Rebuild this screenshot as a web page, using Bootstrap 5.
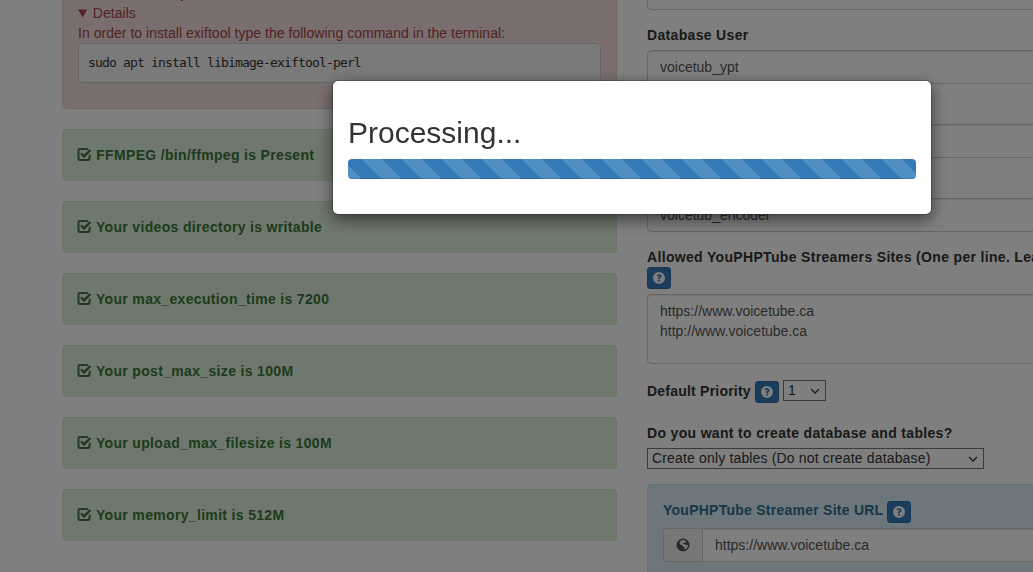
<!DOCTYPE html>
<html lang="en">
<head>
  <meta charset="UTF-8" />
  <meta name="viewport" content="width=device-width, initial-scale=1.0"/>
  <title>Install YouPHPTube</title>
  <link rel="stylesheet" href="https://cdn.jsdelivr.net/npm/bootstrap@5.3.0/dist/css/bootstrap.min.css" />
  <style>
    html, body { height: 100%; overflow: hidden; }
    body { font-family: "Liberation Sans", Arial, sans-serif; font-size: 14px; line-height: 20px; color: #333; background: #fff; }
    .page-box { width: 1170px; margin: -49px 0 0 47px; }
    .page-row { --bs-gutter-x: 30px; margin: 0; }
    .left-col { padding-top: 16px; }
    .msg-box { padding: 15px; border: 1px solid transparent; border-radius: 4px; margin-bottom: 20px; }
    .msg-ok { background: #dff0d8; border-color: #d6e9c6; color: #3c763d; font-weight: 700; letter-spacing: .33px; }
    .msg-bad { background: #f2dede; border-color: #ebccd1; color: #a94442; }
    .msg-bad strong { letter-spacing: .33px; }
    .msg-bad details { letter-spacing: .03px; }
    .msg-info { background: #d9edf7; border-color: #bce8f1; color: #31708f; }
    .msg-bad summary { height: 20px; }
    .cmd-box { display: block; margin: 0 0 10px; padding: 9.5px 9.5px 9.5px 9px; font: 13px/18.57px "DejaVu Sans Mono", monospace; letter-spacing: -.83px; color: #333; background: #f5f5f5; border: 1px solid #ccc; border-radius: 4px; }
    .ico-check { width: 15px; height: 15px; vertical-align: -2px; margin-left: -1px; }
    .ico-help { width: 12px; height: 12px; }
    .field-wrap { margin-bottom: 15px; }
    .field-label { display: block; font-weight: 700; letter-spacing: .33px; margin-bottom: 5px; }
    .field-input { display: block; width: 100%; height: 34px; padding: 6px 12px; color: #555; background: #fff; border: 1px solid #ccc; border-radius: 4px; box-shadow: inset 0 1px 1px rgba(0,0,0,.075); }
    .field-area { height: 70px; resize: none; overflow: hidden; line-height: 20px; }
    .help-btn { display: flex; flex: none; align-items: center; justify-content: center; width: 24px; height: 22px; padding: 0; background: #337ab7; border: 1px solid #2e6da4; border-radius: 3px; }
    .help-line { margin-bottom: 5px; }
    .prio-row { margin-bottom: 20px; }
    .prio-row .field-label { margin: 2px 0 0; letter-spacing: .22px; }
    .prio-row .help-btn { margin-top: 2px; }
    .prio-row .plain-select { margin-top: 1px; width: 43px; }
    .plain-select { display: block; appearance: none; height: 21px; padding: 0 0 0 4px; font-size: 14px; line-height: 19px; color: #333; border: 1px solid #767676; border-radius: 0;
      background: #fff url("data:image/svg+xml,%3Csvg xmlns='http://www.w3.org/2000/svg' width='10' height='6'%3E%3Cpath d='M1 1l4 4 4-4' fill='none' stroke='%23333' stroke-width='1.300'/%3E%3C/svg%3E") no-repeat right 5px center; }
    .db-select { width: 337px; letter-spacing: .16px; }
    .site-head { margin-bottom: 5px; }
    .site-head .field-label { margin: 0; letter-spacing: .25px; }
    .site-head .help-btn { margin-top: 1px; }
    .site-group { display: flex; }
    .site-addon { width: 39px; height: 34px; flex: none; display: flex; align-items: center; justify-content: center; color: #555; background: #eee; border: 1px solid #ccc; border-right: 0; border-radius: 4px 0 0 4px; }
    .site-group .field-input { border-radius: 0 4px 4px 0; }
    .wait-dialog { width: 600px; margin: 80px 0 0 332px; }
    .wait-content { background: #fff; border: 1px solid rgba(0,0,0,.2); border-radius: 6px; box-shadow: 0 5px 15px rgba(0,0,0,.5); background-clip: padding-box; padding: 15px; }
    .wait-title { font: 500 30px/33px "Liberation Sans", Arial, sans-serif; color: #333; margin: 20px 0 10px; }
    .wait-track { height: 20px; margin-bottom: 20px; border-radius: 4px; background: #f5f5f5; overflow: hidden; }
    .wait-bar { height: 100%; background-color: #337ab7; box-shadow: inset 0 -1px 0 rgba(0,0,0,.15);
      background-image: linear-gradient(45deg, rgba(255,255,255,.15) 25%, transparent 25%, transparent 50%, rgba(255,255,255,.15) 50%, rgba(255,255,255,.15) 75%, transparent 75%, transparent);
      background-size: 40px 40px; background-position: 14px 0; }
    .wait-shade { background: #000; opacity: .5; }
  </style>
</head>
<body>
  <svg width="0" height="0" class="position-absolute">
    <symbol id="i-check" viewBox="0 0 15 15">
      <path fill="currentColor" d="M3 1H11V3H3.300Q2.500 3 2.500 3.800V11.200Q2.500 12 3.300 12H10.700Q11.500 12 11.500 11.200V9L13.500 7V11.500Q13.500 14 11 14H3Q.5 14 .5 11.500V3.500Q.5 1 3 1Z"/>
      <path fill="currentColor" d="M7 11 3.200 7.200 5 5.400 7 7.400 12.500 1.900 14.300 3.700Z"/>
    </symbol>
    <symbol id="i-help" viewBox="0 0 12 12">
      <path fill="#fff" fill-rule="evenodd" d="M6 0a6 6 0 1 0 0 12A6 6 0 0 0 6 0ZM6 2.200c1.500 0 2.600.9 2.600 2.100 0 .9-.5 1.300-1.100 1.700-.4.3-.6.5-.6.9H5.100c0-1 .4-1.400 1-1.800.4-.3.7-.4.7-.8 0-.4-.4-.6-.8-.6-.5 0-.8.300-1.100.7L3.600 3.400C4.100 2.700 4.900 2.200 6 2.200ZM5.100 7.800H6.900V9.500H5.100Z"/>
    </symbol>
    <symbol id="i-globe" viewBox="0 0 14 14">
      <path fill="currentColor" fill-rule="evenodd" d="M7 .5a6.500 6.500 0 1 0 0 13 6.500 6.500 0 0 0 0-13ZM5 2.600 8.500 1.900 10 3.500 8.800 5 7.600 4.700 7 6 9.500 6.400 11.700 7 11.900 8.600 10.200 11 8.300 12 8.800 9.600 6.800 8.600 6.600 7.200 4.300 6.400 3.400 4.600Z"/>
    </symbol>
  </svg>

  <div class="page-box">
    <div class="row page-row">
      <div class="col-6 left-col">
        <div class="msg-box msg-bad">
          <strong>Exiftool is not present</strong>
          <details open>
            <summary>Details</summary>
            In order to install exiftool type the following command in the terminal:
            <code class="cmd-box">sudo apt install libimage-exiftool-perl</code>
          </details>
        </div>
        <div class="msg-box msg-ok"><svg class="ico-check"><use href="#i-check"/></svg> FFMPEG /bin/ffmpeg is Present</div>
        <div class="msg-box msg-ok"><svg class="ico-check"><use href="#i-check"/></svg> Your videos directory is writable</div>
        <div class="msg-box msg-ok"><svg class="ico-check"><use href="#i-check"/></svg> Your max_execution_time is 7200</div>
        <div class="msg-box msg-ok"><svg class="ico-check"><use href="#i-check"/></svg> Your post_max_size is 100M</div>
        <div class="msg-box msg-ok"><svg class="ico-check"><use href="#i-check"/></svg> Your upload_max_filesize is 100M</div>
        <div class="msg-box msg-ok"><svg class="ico-check"><use href="#i-check"/></svg> Your memory_limit is 512M</div>
      </div>
      <div class="col-6">
        <div class="field-wrap">
          <label class="field-label">Database Host</label>
          <input class="field-input" type="text" />
        </div>
        <div class="field-wrap">
          <label class="field-label">Database User</label>
          <input class="field-input" type="text" value="voicetub_ypt" />
        </div>
        <div class="field-wrap">
          <label class="field-label">Database Password</label>
          <input class="field-input" type="password" />
        </div>
        <div class="field-wrap">
          <label class="field-label">Encoder Database Name</label>
          <input class="field-input" type="text" value="voicetub_encoder" />
        </div>
        <div class="field-wrap">
          <label class="field-label mb-0 text-nowrap">Allowed YouPHPTube Streamers Sites (One per line. Leave blank to allow all sites)</label>
          <div class="help-line"><button class="help-btn"><svg class="ico-help"><use href="#i-help"/></svg></button></div>
          <textarea class="field-input field-area">https://www.voicetube.ca
http://www.voicetube.ca</textarea>
        </div>
        <div class="d-flex gap-1 prio-row">
          <label class="field-label">Default Priority</label>
          <button class="help-btn"><svg class="ico-help"><use href="#i-help"/></svg></button>
          <select class="plain-select"><option>1</option><option>2</option></select>
        </div>
        <div class="field-wrap">
          <label class="field-label">Do you want to create database and tables?</label>
          <select class="plain-select db-select"><option>Create only tables (Do not create database)</option></select>
        </div>
        <div class="msg-box msg-info">
          <div class="d-flex gap-1 site-head">
            <label class="field-label">YouPHPTube Streamer Site URL</label>
            <button class="help-btn"><svg class="ico-help"><use href="#i-help"/></svg></button>
          </div>
          <div class="site-group">
            <span class="site-addon"><svg width="14" height="14"><use href="#i-globe"/></svg></span>
            <input class="field-input" type="text" value="https://www.voicetube.ca" />
          </div>
        </div>
      </div>
    </div>
  </div>

  <div class="modal-backdrop wait-shade"></div>
  <div class="modal d-block">
    <div class="wait-dialog">
      <div class="wait-content">
        <h2 class="wait-title">Processing...</h2>
        <div class="wait-track"><div class="wait-bar"></div></div>
      </div>
    </div>
  </div>

  <script src="https://cdn.jsdelivr.net/npm/bootstrap@5.3.0/dist/js/bootstrap.bundle.min.js"></script>
</body>
</html>
